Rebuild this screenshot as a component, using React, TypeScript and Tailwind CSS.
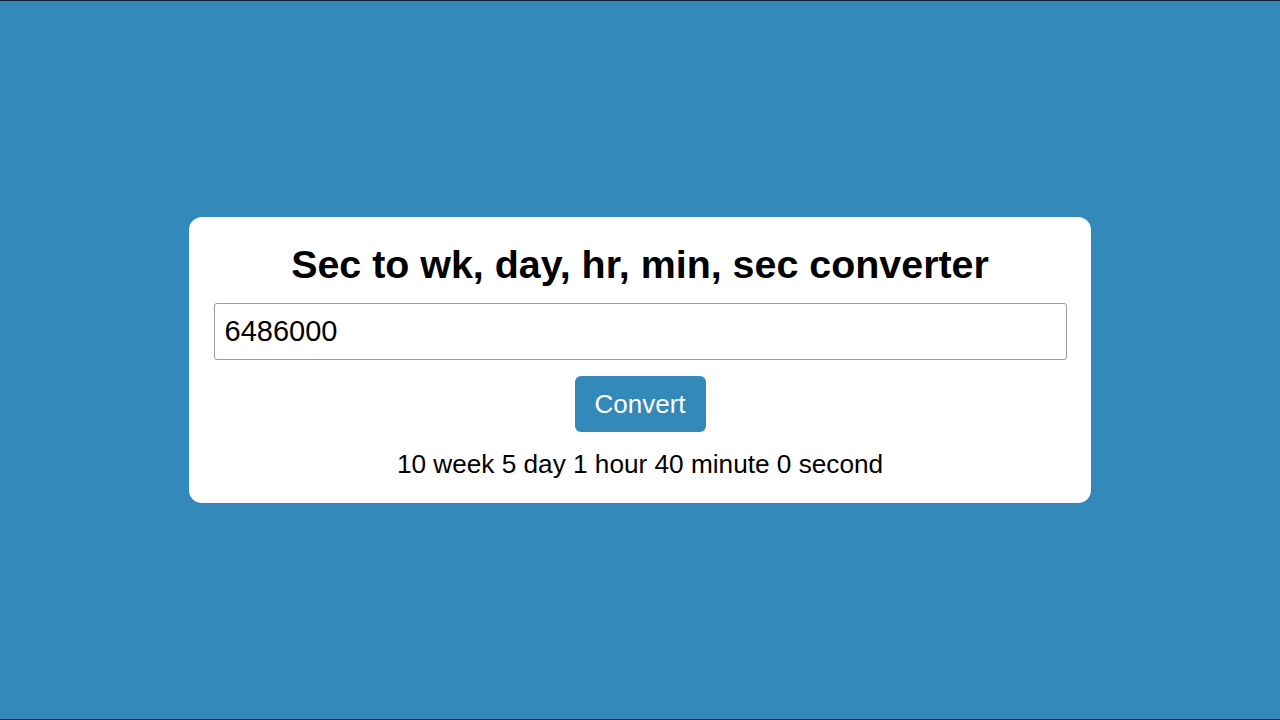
import React, { useState, type JSX } from "react";

function toParts(total: number): string {
  const week = Math.floor(total / 604800);
  const day = Math.floor((total % 604800) / 86400);
  const hour = Math.floor((total % 86400) / 3600);
  const minute = Math.floor((total % 3600) / 60);
  const second = total % 60;
  return `${week} week ${day} day ${hour} hour ${minute} minute ${second} second`;
}

export default function App(): JSX.Element {
  const [value, setValue] = useState("6486000");
  const [result, setResult] = useState(() => toParts(6486000));

  const convert = () => {
    const n = parseInt(value, 10);
    setResult(Number.isFinite(n) && n >= 0 ? toParts(n) : "Enter a valid number");
  };

  return (
    <div
      className="flex h-[720px] w-full items-center justify-center border-y border-[#14213a] bg-[#3389b9]"
      style={{ fontFamily: '"Liberation Sans", Arial, sans-serif' }}
    >
      <div className="flex h-[286px] w-[902px] flex-col items-center rounded-[13px] bg-white px-[25px] pt-[24px]">
        <h1 className="text-[39.4px] leading-[46px] font-bold text-black">
          Sec to wk, day, hr, min, sec converter
        </h1>

        <input
          type="text"
          value={value}
          onChange={(e) => setValue(e.target.value)}
          className="mt-[16px] h-[57px] w-[853px] rounded-[3px] border border-[#9a9a9a] px-[10px] text-[29px] text-black outline-none"
        />

        <button
          type="button"
          onClick={convert}
          className="mt-[16px] h-[56px] w-[131px] rounded-[6px] bg-[#3389b9] text-[26px] text-white"
        >
          Convert
        </button>

        <p className="mt-[17px] text-[26.2px] leading-[30px] text-black">{result}</p>
      </div>
    </div>
  );
}
